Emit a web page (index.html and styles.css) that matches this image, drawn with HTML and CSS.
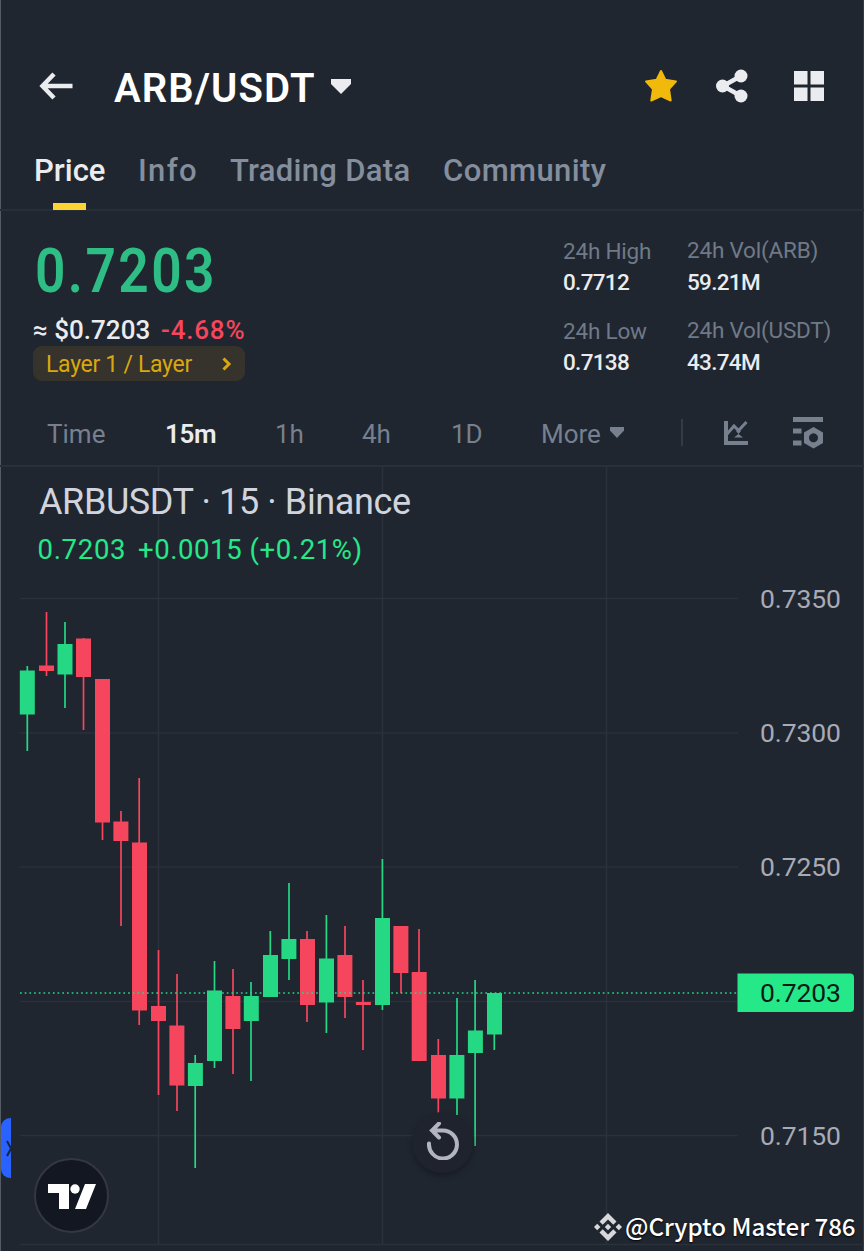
FILE: index.html
```
<!DOCTYPE html>
<html lang="en">
    <head>
        <meta charset="utf-8" />
        <title>ARB/USDT</title>
        <link rel="stylesheet" href="styles.css">
    </head>
    <body>
        <div class="app">
            <header class="topbar">
                <svg class="back" width="34" height="28" viewBox="0 0 34 28"><path d="M15 2L3.500 14 15 26M4 14h29.500" /></svg>
                <h1>ARB/USDT</h1>
                <svg class="caret" width="22" height="17" viewBox="0 0 22 17"><path d="M1 1h20v5L11 16 1 6z" /></svg>
                <div class="actions">
                    <svg width="34" height="34" viewBox="0 0 34 34"><path class="star" d="M17 2l4.300 8.800 10.700 1.600-7 7.800 1.700 11.300L17 27.100 7.300 31.500 9 20.200 2 12.400l10.700-1.600z" /></svg>
                    <svg class="share" width="32" height="34" viewBox="0 0 32 34"><path d="M25 7L7 17l18 10" /><circle cx="25" cy="7" r="6.500" /><circle cx="6.500" cy="17" r="6.500" /><circle cx="25" cy="27" r="6.500" /></svg>
                    <svg class="grid" width="30" height="30" viewBox="0 0 30 30"><path d="M0 0h13.500v13.500H0zM16.500 0H30v13.500H16.500zM0 16.500h13.500V30H0zM16.500 16.500H30V30H16.500z" /></svg>
                </div>
            </header>
            <nav class="tabs">
                <a class="price active">Price</a>
                <a class="info">Info</a>
                <a class="trading">Trading Data</a>
                <a class="community">Community</a>
            </nav>
            <section class="summary">
                <div class="quote">
                    <div class="last">0.7203</div>
                    <div class="fiat"><span class="usd">≈ $0.7203</span><span class="change">-4.68%</span></div>
                    <div class="tag"><span>Layer 1 / Layer</span><svg width="10" height="14" viewBox="0 0 10 14"><path d="M1.500 1.500L7 7l-5.500 5.500" /></svg></div>
                </div>
                <dl class="stats">
                    <div><dt>24h High</dt><dd>0.7712</dd></div>
                    <div class="vol"><dt>24h Vol(ARB)</dt><dd>59.21M</dd></div>
                    <div><dt>24h Low</dt><dd>0.7138</dd></div>
                    <div class="vol"><dt>24h Vol(USDT)</dt><dd>43.74M</dd></div>
                </dl>
            </section>
            <nav class="intervals">
                <a class="time">Time</a>
                <a class="m15 active">15m</a>
                <a class="h1">1h</a>
                <a class="h4">4h</a>
                <a class="d1">1D</a>
                <a class="more">More</a>
                <svg class="more-caret" width="14" height="11" viewBox="0 0 14 11"><path d="M0 0h14v3.500L7 11 0 3.500z" /></svg>
                <i class="divider"></i>
                <svg class="indicator" width="24" height="26" viewBox="0 0 24 26"><path class="line" d="M2 1v22h22" /><path class="thin" d="M3 14l7-8 4.500 4.500L22.500 2" /><path class="fill" d="M10 17.500l4.500-3.500 4.500 3.500zM12 11h5l-2.500 3z" /></svg>
                <svg class="settings" width="30" height="32" viewBox="0 0 30 32"><path d="M0 0h30v5H0zM0 11.500h8.500v5H0zM0 23.500h8.500v5H0z" /><path fill-rule="evenodd" d="M20.500 10l9.500 5.500v10.500l-9.500 5.500-9.500-5.500V15.500zM20.500 16.300a4.500 4.500 0 1 0 .01 0z" /></svg>
            </nav>
            <main class="chart">
                <svg class="plot" width="864" height="784" viewBox="0 467 864 784">
                    <g class="gridlines">
                        <path d="M20 598.500H738M20 733H738M20 867H738M20 1001.500H738M20 1135.500H738M20 1244.500H864" />
                        <path d="M158.500 467V1244M382.500 467V1244M606.500 467V1244" />
                    </g>
                    <g class="down">
                        <path class="wick" d="M46.500 612V676M83.500 638V730M102.500 679V840M121 811V926M139.200 778V1025M158.500 950V1095M177 974V1111M233 969V1074M307 931V1022M345 926V1018M363 980V1050M401 926V993M419 929V1061M438.300 1039V1122" />
                        <path class="body" d="M46.500 665.500V671M83.500 638.500V677M102.500 679V822.500M120.900 821.500V841M139.500 842.500V1010.500M158.500 1006V1021M176.900 1025.500V1085.500M232.900 996V1029M307.500 939V1005M344.900 955V997M363.400 1002V1005M400.900 926V973M419.200 972V1061M438.500 1055V1098.500" />
                    </g>
                    <g class="up">
                        <path class="wick" d="M27.300 666V751M65 622V708M195.200 1055V1168M214.500 961V1068M251 982V1081M270.300 931V997M289 883V980M326.400 915V1033M382.400 859V1010M457 998V1115M475.100 980V1146M494.300 993V1050" />
                        <path class="body" d="M27.300 670.500V714.500M65 644V674.500M195.400 1063V1086M214.500 990.500V1061M251.300 996V1021M270.500 955V997M288.900 939V959M326.500 958.500V1002.500M382.500 918V1005M456.900 1055V1098.500M475.400 1030.500V1053M494.500 993V1034.500" />
                    </g>
                    <path class="price-line" d="M20 993H738" />
                    <path class="price-tag" d="M737.500 973.500H850q4 0 4 4V1008q0 4-4 4H737.500z" />
                    <text class="symbol" x="39" y="514" textLength="372">ARBUSDT · 15 · Binance</text>
                    <text class="move" x="37.500" y="559" textLength="88">0.7203</text>
                    <text class="move" x="138" y="559" textLength="224">+0.0015 (+0.21%)</text>
                    <g class="axis">
                        <text x="760" y="608" textLength="81">0.7350</text>
                        <text x="760" y="742" textLength="81">0.7300</text>
                        <text x="760" y="876" textLength="81">0.7250</text>
                        <text class="current" x="760" y="1002" textLength="81">0.7203</text>
                        <text x="760" y="1145" textLength="81">0.7150</text>
                    </g>
                </svg>
                <button class="reset"><svg width="32" height="38" viewBox="0 0 32 38"><path d="M2 21.500A14 14 0 1 0 16 8.500H5M12 1.500L5 8.500l7 7" /></svg></button>
                <div class="handle"><svg width="5" height="17" viewBox="0 0 5 17"><path d="M1 1l4 7.500L1 16" /></svg></div>
                <div class="tv"><svg width="48" height="25" viewBox="0 0 48 25"><path d="M0 0h21v25H11V9H0zM37 0h11L38 25H27z" /><circle cx="27" cy="5" r="4.700" /></svg></div>
                <div class="watermark">
                    <svg width="28" height="28" viewBox="0 0 28 28"><path d="M14 0l8.500 8.500-3.200 3.200L14 6.400l-5.300 5.300-3.200-3.200zM14 28l8.500-8.500-3.200-3.200L14 21.600l-5.300-5.300-3.200 3.200zM14 10.800l3.200 3.200-3.200 3.200-3.200-3.200zM3.200 10.800L6.400 14l-3.200 3.200L0 14zM24.800 10.800L28 14l-3.200 3.200-3.200-3.200z" /></svg>
                    <span>@Crypto Master 786</span>
                </div>
            </main>
        </div>
    </body>
</html>
```
FILE: styles.css
```
* {
    box-sizing: border-box;
}
body {
    margin: 0;
    background: #202630;
    color: #eaecef;
    font-family: Roboto, "Noto Sans", sans-serif;
}
svg {
    display: block;
    flex: none;
}
.app {
    width: 864px;
    height: 1251px;
    overflow: hidden;
    box-shadow: inset 1px 0 #555b65, inset -1px 0 #343b46;
}
.topbar {
    display: flex;
    align-items: center;
    height: 126px;
    padding: 46px 40px 0 39px;
}
.back {
    fill: none;
    stroke: #eaecef;
    stroke-width: 4.5;
}
h1 {
    width: 216px;
    margin: 5px 0 0 41px;
    color: #fff;
    font-size: 40px;
    font-weight: 600;
    line-height: 48px;
    letter-spacing: 1.1px;
    white-space: nowrap;
}
.caret {
    fill: #eaecef;
}
.actions {
    display: flex;
    align-items: center;
    margin-left: auto;
    fill: #eaecef;
}
.star {
    fill: #f0b90b;
    stroke: #f0b90b;
    stroke-width: 2;
    stroke-linejoin: round;
}
.share {
    margin-left: 38px;
}
.share path {
    fill: none;
    stroke: #eaecef;
    stroke-width: 4.5;
}
.grid {
    margin-left: 46px;
}
.tabs {
    display: flex;
    height: 85px;
    padding: 26px 0 0 34px;
    border-bottom: 2px solid #282e38;
    color: #848e9c;
    font-size: 31px;
    font-weight: 500;
    line-height: 38px;
    white-space: nowrap;
}
.tabs .price {
    position: relative;
    width: 104px;
    color: #eaecef;
}
.tabs .active::after {
    content: "";
    position: absolute;
    left: 19px;
    bottom: -1px;
    width: 33px;
    height: 7px;
    background: #fcd535;
}
.tabs .info {
    width: 92px;
    letter-spacing: 1.3px;
}
.tabs .trading {
    width: 213px;
    letter-spacing: .3px;
}
.tabs .community {
    letter-spacing: .4px;
}
.summary {
    display: flex;
    height: 189px;
    padding: 24px 0 0 33px;
}
.quote {
    width: 530px;
}
.last {
    margin: 3px 0 0 2px;
    color: #2ebd85;
    font-size: 62px;
    font-weight: 600;
    line-height: 66px;
    letter-spacing: 2.8px;
    transform: scaleX(.86);
    transform-origin: 0 50%;
}
.fiat {
    display: flex;
    margin-top: 11px;
    font-size: 26px;
    font-weight: 500;
    line-height: 30px;
}
.usd {
    width: 128px;
}
.change {
    color: #f6465d;
    letter-spacing: .8px;
}
.tag {
    display: flex;
    align-items: center;
    justify-content: space-between;
    width: 212px;
    height: 35px;
    margin-top: 1px;
    padding: 1px 13px 0;
    border-radius: 9px;
    background: #35332c;
    color: #d9a80f;
    font-size: 23px;
    letter-spacing: -.3px;
    white-space: nowrap;
}
.tag svg {
    fill: none;
    stroke: #d9a80f;
    stroke-width: 3;
}
.stats {
    display: grid;
    grid-template-columns: 124px 150px;
    grid-auto-rows: 80px;
    margin: 3px 0 0;
    font-size: 22.5px;
    line-height: 28px;
    letter-spacing: -.2px;
    white-space: nowrap;
}
dt {
    margin-top: -1px;
    color: #6f7987;
}
dd {
    margin: 3px 0 0;
    font-weight: 500;
    letter-spacing: -.7px;
}
.vol dt {
    margin-top: -2px;
}
.vol dd {
    margin-top: 4px;
}
.intervals {
    display: flex;
    align-items: center;
    height: 67px;
    padding-left: 47px;
    border-bottom: 2px solid #29303b;
    color: #76808f;
    font-size: 26px;
    white-space: nowrap;
}
.intervals a {
    padding-top: 2px;
}
.intervals .time {
    width: 118px;
}
.intervals .m15 {
    width: 110px;
    color: #eaecef;
    font-weight: 600;
    letter-spacing: -.3px;
}
.intervals .h1 {
    width: 87px;
}
.intervals .h4 {
    width: 89px;
}
.intervals .d1 {
    width: 90px;
}
.intervals .more {
    width: 69px;
}
.intervals svg {
    fill: #76808f;
}
.divider {
    width: 2px;
    height: 27px;
    margin-left: 57px;
    background: #343b47;
}
.indicator {
    margin-left: 41px;
}
.intervals .line, .intervals .thin {
    fill: none;
    stroke: #76808f;
    stroke-width: 4;
}
.intervals .thin {
    stroke-width: 3;
}
.settings {
    margin-left: 45px;
}
.chart {
    position: relative;
    height: 784px;
}
.gridlines {
    stroke: #2a313b;
    stroke-width: 1.5;
}
.wick {
    stroke-width: 1.7;
}
.body {
    stroke-width: 15;
}
.down {
    stroke: #f6465d;
}
.up {
    stroke: #25d884;
}
.price-line {
    stroke: #25d884;
    stroke-width: 1.7;
    stroke-dasharray: 1.7 3;
}
.price-tag {
    fill: #25e889;
}
.symbol {
    fill: #d1d4dc;
    font-size: 36px;
}
.move {
    fill: #25e889;
    font-size: 27.5px;
}
.axis {
    fill: #a7abb6;
    font-size: 26.5px;
}
.axis .current {
    fill: #0b1a15;
}
.reset {
    position: absolute;
    left: 412px;
    top: 645px;
    display: flex;
    align-items: center;
    justify-content: center;
    width: 61px;
    height: 61px;
    padding: 0 0 4px;
    border: 0;
    border-radius: 50%;
    background: #1f232d;
    box-shadow: 0 3px 5px #171b24;
}
.reset svg {
    fill: none;
    stroke: #b2b5be;
    stroke-width: 4;
    stroke-linecap: round;
}
.handle {
    position: absolute;
    left: 1px;
    top: 651px;
    display: flex;
    align-items: center;
    justify-content: flex-end;
    width: 10px;
    height: 60px;
    border-radius: 9px 0 0 9px;
    background: #2962ff;
}
.handle svg {
    fill: none;
    stroke: #1b2436;
    stroke-width: 2;
}
.tv {
    position: absolute;
    left: 34px;
    top: 691px;
    display: flex;
    align-items: center;
    justify-content: center;
    width: 75px;
    height: 75px;
    padding-top: 2px;
    border: 2px solid #343741;
    border-radius: 50%;
    background: #131722;
    fill: #fff;
}
.watermark {
    position: absolute;
    left: 594px;
    top: 742px;
    display: flex;
    align-items: center;
    gap: 3px;
    height: 36px;
    color: #fff;
    fill: #d7d8da;
    font: 500 24.1px/32px "Noto Sans CJK SC", sans-serif;
    text-shadow: 0 1px 2px #000;
    white-space: nowrap;
}
.watermark span {
    margin-top: -2px;
}
```
